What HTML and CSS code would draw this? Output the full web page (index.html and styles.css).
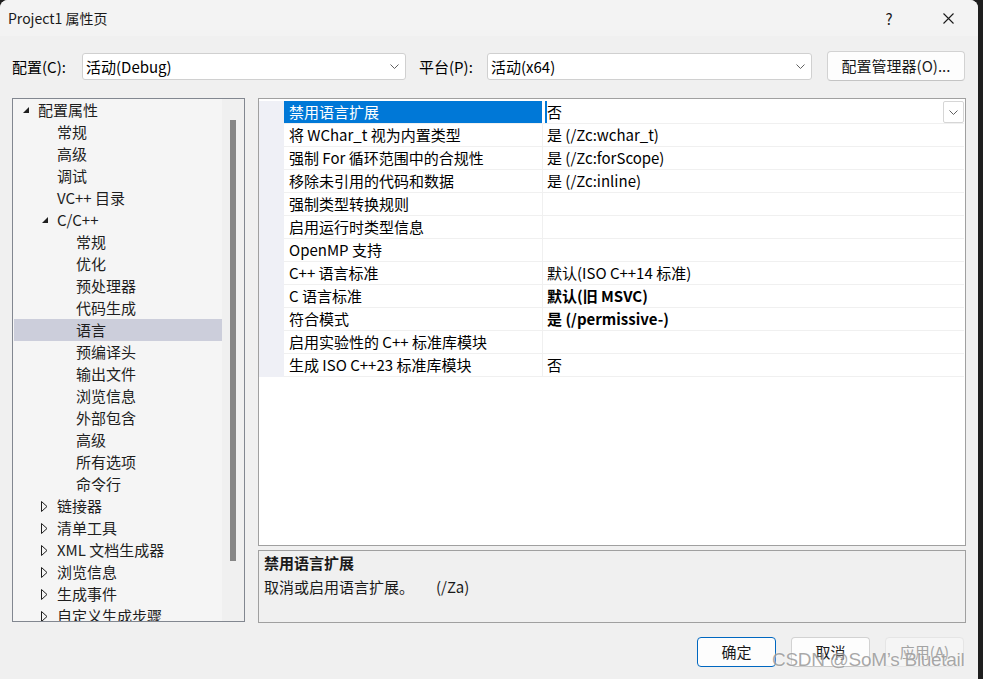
FILE: index.html
```html
<!DOCTYPE html>
<html lang="zh-CN">
<head>
    <meta charset="UTF-8">
    <title>Project1 属性页</title>
    <link rel="stylesheet" href="styles.css">
</head>
<body>

    <div class="window">
        <div class="titlebar">
            <span class="title">Project1 属性页</span>
            <span class="title-btn help">?</span>
            <span class="title-btn close">
                <svg width="11" height="11" viewBox="0 0 11 11"><path d="M0.5 0.5 L10.5 10.5 M10.5 0.5 L0.5 10.5" stroke="#1a1a1a" stroke-width="1.1" fill="none"/></svg>
            </span>
        </div>

        <div class="config-row">
            <span class="lbl lbl-config">配置(C):</span>
            <div class="combo combo-config">
                <span>活动(Debug)</span>
                <svg class="chev" width="9" height="5" viewBox="0 0 9 5"><path d="M0.5 0.5 L4.5 4.5 L8.5 0.5" stroke="#606060" fill="none"/></svg>
            </div>
            <span class="lbl lbl-platform">平台(P):</span>
            <div class="combo combo-platform">
                <span>活动(x64)</span>
                <svg class="chev" width="9" height="5" viewBox="0 0 9 5"><path d="M0.5 0.5 L4.5 4.5 L8.5 0.5" stroke="#606060" fill="none"/></svg>
            </div>
            <button class="btn btn-manager">配置管理器(O)...</button>
        </div>

        <div class="main">
            <div class="tree">
                <ul class="tree-list">
                    <li class="lv0"><span class="twisty"><svg width="8" height="8" viewBox="0 0 8 8"><polygon points="7,1 7,7 1,7" fill="#1e1e1e"/></svg></span>配置属性</li>
                    <li class="lv1"><span class="twisty"></span>常规</li>
                    <li class="lv1"><span class="twisty"></span>高级</li>
                    <li class="lv1"><span class="twisty"></span>调试</li>
                    <li class="lv1"><span class="twisty"></span>VC++ 目录</li>
                    <li class="lv1"><span class="twisty"><svg width="8" height="8" viewBox="0 0 8 8"><polygon points="7,1 7,7 1,7" fill="#1e1e1e"/></svg></span>C/C++</li>
                    <li class="lv2"><span class="twisty"></span>常规</li>
                    <li class="lv2"><span class="twisty"></span>优化</li>
                    <li class="lv2"><span class="twisty"></span>预处理器</li>
                    <li class="lv2"><span class="twisty"></span>代码生成</li>
                    <li class="lv2 selected"><span class="twisty"></span>语言</li>
                    <li class="lv2"><span class="twisty"></span>预编译头</li>
                    <li class="lv2"><span class="twisty"></span>输出文件</li>
                    <li class="lv2"><span class="twisty"></span>浏览信息</li>
                    <li class="lv2"><span class="twisty"></span>外部包含</li>
                    <li class="lv2"><span class="twisty"></span>高级</li>
                    <li class="lv2"><span class="twisty"></span>所有选项</li>
                    <li class="lv2"><span class="twisty"></span>命令行</li>
                    <li class="lv1"><span class="twisty"><svg width="7" height="11" viewBox="0 0 7 11"><polygon points="0.5,0.5 6,5.5 0.5,10.5" fill="none" stroke="#1e1e1e"/></svg></span>链接器</li>
                    <li class="lv1"><span class="twisty"><svg width="7" height="11" viewBox="0 0 7 11"><polygon points="0.5,0.5 6,5.5 0.5,10.5" fill="none" stroke="#1e1e1e"/></svg></span>清单工具</li>
                    <li class="lv1"><span class="twisty"><svg width="7" height="11" viewBox="0 0 7 11"><polygon points="0.5,0.5 6,5.5 0.5,10.5" fill="none" stroke="#1e1e1e"/></svg></span>XML 文档生成器</li>
                    <li class="lv1"><span class="twisty"><svg width="7" height="11" viewBox="0 0 7 11"><polygon points="0.5,0.5 6,5.5 0.5,10.5" fill="none" stroke="#1e1e1e"/></svg></span>浏览信息</li>
                    <li class="lv1"><span class="twisty"><svg width="7" height="11" viewBox="0 0 7 11"><polygon points="0.5,0.5 6,5.5 0.5,10.5" fill="none" stroke="#1e1e1e"/></svg></span>生成事件</li>
                    <li class="lv1"><span class="twisty"><svg width="7" height="11" viewBox="0 0 7 11"><polygon points="0.5,0.5 6,5.5 0.5,10.5" fill="none" stroke="#1e1e1e"/></svg></span>自定义生成步骤</li>
                </ul>
                <div class="tree-scroll">
                    <div class="thumb"></div>
                </div>
            </div>

            <div class="right">
                <div class="grid">
                    <div class="row selected">
                        <div class="strip"></div>
                        <div class="name">禁用语言扩展</div>
                        <div class="val"><span>否</span>
                            <span class="drop"><svg width="9" height="5" viewBox="0 0 9 5"><path d="M0.5 0.5 L4.5 4.5 L8.5 0.5" stroke="#606060" fill="none"/></svg></span>
                        </div>
                    </div>
                    <div class="row"><div class="strip"></div><div class="name">将 WChar_t 视为内置类型</div><div class="val">是 (/Zc:wchar_t)</div></div>
                    <div class="row"><div class="strip"></div><div class="name">强制 For 循环范围中的合规性</div><div class="val">是 (/Zc:forScope)</div></div>
                    <div class="row"><div class="strip"></div><div class="name">移除未引用的代码和数据</div><div class="val">是 (/Zc:inline)</div></div>
                    <div class="row"><div class="strip"></div><div class="name">强制类型转换规则</div><div class="val"></div></div>
                    <div class="row"><div class="strip"></div><div class="name">启用运行时类型信息</div><div class="val"></div></div>
                    <div class="row"><div class="strip"></div><div class="name">OpenMP 支持</div><div class="val"></div></div>
                    <div class="row"><div class="strip"></div><div class="name">C++ 语言标准</div><div class="val">默认(ISO C++14 标准)</div></div>
                    <div class="row"><div class="strip"></div><div class="name">C 语言标准</div><div class="val bold">默认(旧 MSVC)</div></div>
                    <div class="row"><div class="strip"></div><div class="name">符合模式</div><div class="val bold">是 (/permissive-)</div></div>
                    <div class="row"><div class="strip"></div><div class="name">启用实验性的 C++ 标准库模块</div><div class="val"></div></div>
                    <div class="row"><div class="strip"></div><div class="name">生成 ISO C++23 标准库模块</div><div class="val">否</div></div>
                </div>
                <div class="desc">
                    <div class="desc-title">禁用语言扩展</div>
                    <div class="desc-text">取消或启用语言扩展。<span class="switch">(/Za)</span></div>
                </div>
            </div>
        </div>

        <div class="buttons">
            <button class="btn btn-ok">确定</button>
            <button class="btn">取消</button>
            <button class="btn btn-disabled">应用(A)</button>
        </div>

        <div class="watermark">CSDN @SoM’s Bluetail</div>
    </div>

</body>
</html>
```

FILE: styles.css
```css
* {
    margin: 0;
    padding: 0;
    box-sizing: border-box;
}

body {
    background: #1e1e1e;
    font-family: "Noto Sans CJK SC", "Noto Sans", sans-serif;
    font-size: 15px;
    color: #000;
    overflow: hidden;
}

.window {
    position: relative;
    width: 978px;
    height: 679px;
    background: #f0f0f0;
    border-radius: 8px 8px 0 0;
    overflow: hidden;
}

/* title bar */
.titlebar {
    height: 36px;
    background: #f3f3f3;
    display: flex;
    align-items: center;
    padding-right: 7px;
}

.title {
    padding-left: 8px;
    font-size: 14px;
    color: #1a1a1a;
}

.title-btn {
    width: 46px;
    height: 36px;
    display: flex;
    align-items: center;
    justify-content: center;
    font-size: 15px;
    color: #1a1a1a;
}

.help {
    margin-left: auto;
}

.close {
    margin-left: 13px;
}

/* config row */
.config-row {
    display: flex;
    align-items: center;
    height: 30px;
    margin-top: 15px;
    padding-left: 12px;
}

.lbl {
    line-height: 27px;
}

.lbl-config {
    width: 70px;
}

.lbl-platform {
    width: 68px;
    margin-left: 13px;
}

.combo {
    height: 27px;
    background: #fff;
    border: 1px solid #d0d0d0;
    border-radius: 3px;
    display: flex;
    align-items: center;
    padding: 0 6px 0 3px;
    line-height: 25px;
}

.combo .chev {
    margin-left: auto;
}

.combo-config {
    width: 324px;
}

.combo-platform {
    width: 325px;
}

.btn {
    font-family: "Noto Sans CJK SC", "Noto Sans", sans-serif;
    font-size: 15px;
    color: #1a1a1a;
    background: #fdfdfd;
    border: 1px solid #d2d2d2;
    border-bottom-color: #c4c4c4;
    border-radius: 4px;
    height: 30px;
    line-height: 28px;
}

.btn-manager {
    width: 138px;
    margin-left: 15px;
}

/* main area */
.main {
    display: flex;
    margin-top: 17px;
    padding-left: 12px;
    height: 525px;
}

.tree {
    width: 233px;
    height: 524px;
    border: 1px solid #828790;
    background: #f5f5f5;
    display: flex;
    overflow: hidden;
}

.tree-list {
    list-style: none;
    width: 209px;
    padding: 0 0 0 1px;
    color: #1e1e1e;
}

.tree-list li {
    height: 22px;
    line-height: 22px;
    display: flex;
    align-items: center;
    white-space: nowrap;
}

.tree-list .lv0 {
    padding-left: 8px;
}

.tree-list .lv1 {
    padding-left: 27px;
}

.tree-list .lv2 {
    padding-left: 46px;
}

.tree-list .selected {
    background: #cccedb;
}

.twisty {
    width: 16px;
    display: flex;
    align-items: center;
}

.tree-scroll {
    width: 22px;
    background: #f0f0f0;
    padding: 21px 0 0 8px;
}

.thumb {
    width: 6px;
    height: 441px;
    background: #868686;
}

.right {
    margin-left: 13px;
    width: 708px;
    display: flex;
    flex-direction: column;
}

/* property grid */
.grid {
    height: 448px;
    background: #fff;
    border: 1px solid #a0a0a0;
    padding-top: 2px;
}

.row {
    display: grid;
    grid-template-columns: 25px 259px 1fr;
    height: 23px;
    line-height: 22px;
    white-space: nowrap;
}

.strip {
    background: #eff0f6;
}

.name {
    padding-left: 5px;
    border-right: 1px solid #f0f0f0;
    border-bottom: 1px solid #f0f0f0;
}

.val {
    padding-left: 4px;
    margin-right: 1px;
    border-bottom: 1px solid #f0f0f0;
    display: flex;
}

.val.bold {
    font-weight: bold;
}

.row.selected .name {
    background: #0078d7;
    color: #fff;
    border-right-color: #fff;
}

.row.selected .val {
    background: linear-gradient(to right, transparent 2px, #0078d7 2px, #0078d7 4px, transparent 4px);
}

.drop {
    margin-left: auto;
    width: 21px;
    height: 22px;
    border: 1px solid #d6d6d6;
    border-radius: 2px;
    display: flex;
    align-items: center;
    justify-content: center;
}

/* description */
.desc {
    margin-top: 4px;
    height: 73px;
    border: 1px solid #a0a0a0;
    padding-left: 5px;
    color: #1a1a1a;
}

.desc-title {
    font-weight: bold;
    line-height: 24px;
}

.desc-text {
    line-height: 23px;
}

.switch {
    margin-left: 22px;
}

/* dialog buttons */
.buttons {
    display: flex;
    justify-content: flex-end;
    gap: 15px;
    margin-top: 14px;
    padding-right: 14px;
}

.buttons .btn {
    width: 79px;
}

.btn-ok {
    border: 1px solid #0067c0;
}

.btn-disabled {
    color: #a3a3a3;
    background: #f5f5f5;
    border-color: #e5e5e5;
}

.watermark {
    position: absolute;
    left: 772px;
    top: 649px;
    font-family: "Liberation Sans", sans-serif;
    font-size: 19px;
    color: rgba(140, 140, 140, 0.75);
    letter-spacing: -0.3px;
    text-shadow: 0 0 2px rgba(255, 255, 255, 0.8);
}
```
